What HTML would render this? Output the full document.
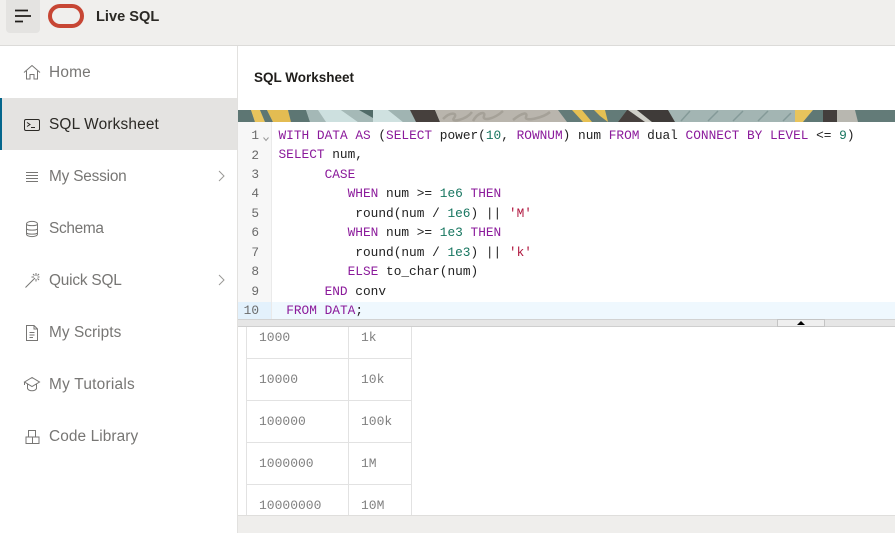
<!DOCTYPE html>
<html><head><meta charset="utf-8">
<style>
*{box-sizing:border-box}
html,body{margin:0;padding:0}
body{width:895px;height:533px;overflow:hidden;background:#fff;position:relative;font-family:"Liberation Sans",sans-serif}
.abs{position:absolute}
#top{left:0;top:0;width:895px;height:46px;background:#f0efed;border-bottom:1.5px solid #dcdbd9}
#burger{left:6px;top:0;width:34px;height:33px;background:#e4e3e1;border-radius:0 0 4px 4px}
#title{left:96px;top:7px;font-size:14.6px;font-weight:bold;color:#2b2925;line-height:20px}
#side{left:0;top:46px;width:238px;height:487px;background:#fff;border-right:1px solid #e2e1df}
#sel{left:0;top:98px;width:237px;height:52px;background:#e4e3e1;border-left:2px solid #04668c}
.nav{position:absolute;left:49px;font-size:15.4px;line-height:20px;color:#777674;white-space:nowrap}
.nav.on{color:#2b2925}
.ic{position:absolute;left:22px;width:20px;height:20px;fill:none;stroke:#777674;stroke-width:1}
.chev{position:absolute;left:217px;width:9px;height:12px;fill:none;stroke:#9a9996;stroke-width:1}
#h{left:254px;top:69px;font-size:13.5px;font-weight:bold;color:#1f1d1a;line-height:18px}
#gut{left:238px;top:122px;width:34px;height:197px;background:#f7f7f7;border-right:1px solid #eaeaea}
#act{left:272px;top:302px;width:623px;height:17px;background:#eff8fe}
#actg{left:238px;top:302px;width:33px;height:17px;background:#e3f1fc}
.ln{position:absolute;right:636px;font:12.8px/19.45px "Liberation Mono",monospace;color:#6a6a6a;width:40px;text-align:right}
#code{left:278.5px;top:126px;margin:0;font:12.8px/19.45px "Liberation Mono",monospace;color:#222;white-space:pre}
.k{color:#8b1a9b}.n{color:#16755f}.s{color:#b0173f}
#split{left:238px;top:319px;width:657px;height:8px;background:#e6e6e6;border-top:1px solid #d2d2d2;border-bottom:1px solid #cfcfcf}
#grip{left:777px;top:319px;width:48px;height:8px;background:#efefef;border:1px solid #c4c4c4}
#tri{left:797px;top:321px;width:0;height:0;border-left:4px solid transparent;border-right:4px solid transparent;border-bottom:4px solid #000}
#res{left:238px;top:327px;width:657px;height:189px;overflow:hidden;background:#fff}
.hl,.vl{position:absolute;background:#e2e2e2}
.c{position:absolute;font:13px/18px "Liberation Mono",monospace;color:#808080;white-space:pre}
#foot{left:238px;top:515px;width:657px;height:18px;background:#efeeec;border-top:1px solid #dfdedc}
</style></head><body>

<div class="abs" id="top"></div>
<div class="abs" id="burger"></div>
<svg class="abs" style="left:14px;top:8px" width="18" height="16"><path d="M1 2.5H14M1 8H17M1 13.5H9" stroke="#1f1d1a" stroke-width="1.8" fill="none"/></svg>
<svg class="abs" style="left:47px;top:3px" width="38" height="26"><rect x="3" y="3" width="32" height="20" rx="10" fill="none" stroke="#c74634" stroke-width="4"/></svg>
<div class="abs" id="title">Live SQL</div>

<div class="abs" id="side"></div>
<div class="abs" id="sel"></div>

<svg class="ic" style="top:62px" viewBox="0 0 20 20"><path d="M2 10.5L10 3.5L18 10.5M4.5 9V17H8V12.5H12V17H15.5V9"/></svg>
<div class="nav" style="top:63px;letter-spacing:.2px">Home</div>

<svg class="ic" style="top:115px" viewBox="0 0 20 20"><rect x="2.5" y="4.5" width="15" height="11" rx="1.5" stroke="#2b2925"/><path d="M5 7.5L8 9.5L5 11.5M9 12.5H13" stroke="#2b2925"/></svg>
<div class="nav on" style="top:115px;letter-spacing:.17px">SQL Worksheet</div>

<svg class="ic" style="top:167px" viewBox="0 0 20 20"><path d="M4 5.5H16M4 8.5H16M4 11.5H16M4 14.5H16"/></svg>
<div class="nav" style="top:167px;letter-spacing:-.2px">My Session</div>
<svg class="chev" style="top:170px" viewBox="0 0 9 12"><path d="M2 1L7 6L2 11"/></svg>

<svg class="ic" style="top:219px" viewBox="0 0 20 20"><path d="M4.5 5C4.5 1.5 15.5 1.5 15.5 5V15C15.5 18.5 4.5 18.5 4.5 15ZM4.5 5.5C6 7 14 7 15.5 5.5M4.5 10C6 11.5 14 11.5 15.5 10M4.5 14C6 15.5 14 15.5 15.5 14"/></svg>
<div class="nav" style="top:219px;letter-spacing:-.3px">Schema</div>

<svg class="ic" style="top:270px" viewBox="0 0 20 20"><path d="M3.5 17.5L13 8M14 3V6M14 9V11.5M9.5 7H12M15.5 7H17.5M11 4L12.5 5.5M17 4L15.5 5.5M15.5 8.5L17 10"/></svg>
<div class="nav" style="top:271px;letter-spacing:-.2px">Quick SQL</div>
<svg class="chev" style="top:274px" viewBox="0 0 9 12"><path d="M2 1L7 6L2 11"/></svg>

<svg class="ic" style="top:323px" viewBox="0 0 20 20"><path d="M4.5 2.5H12L15.5 6V17.5H4.5ZM12 2.5V6H15.5M7.5 9.5H12.5M7.5 12H12.5M7.5 14.5H11"/></svg>
<div class="nav" style="top:323px;letter-spacing:.05px">My Scripts</div>

<svg class="ic" style="top:374px" viewBox="0 0 20 20"><path d="M10 3.5L2.5 8L10 12.5L17.5 8ZM5.5 10V14.5C7 17.5 13 17.5 14.5 14.5V10M2.5 8V11"/></svg>
<div class="nav" style="top:375px;letter-spacing:.25px">My Tutorials</div>

<svg class="ic" style="top:427px" viewBox="0 0 20 20"><path d="M6.5 3.5H13.5V10H6.5ZM4 10H17V16.5H4ZM10.5 10V16.5"/></svg>
<div class="nav" style="top:427px;letter-spacing:.1px">Code Library</div>

<div class="abs" id="h">SQL Worksheet</div>

<svg class="abs" style="left:238px;top:110px" width="657" height="12" viewBox="0 0 657 12" preserveAspectRatio="none">
<rect width="657" height="12" fill="#a3b5b3"/>
<polygon points="0,0 13,0 17,12 0,12" fill="#5d7673"/>
<polygon points="13,0 22,0 27,12 17,12" fill="#e8c35c"/>
<polygon points="22,0 29,0 35,12 27,12" fill="#5d7673"/>
<polygon points="29,0 50,0 53,12 35,12" fill="#e3bc52"/>
<polygon points="50,0 68,0 72,12 53,12" fill="#5d7673"/>
<polygon points="68,0 80,0 88,12 72,12" fill="#a4b8b6"/>
<polygon points="80,0 103,0 120,12 88,12" fill="#cde0df"/>
<polygon points="103,0 121,0 135,8 135,12 120,12" fill="#a5b9b7"/>
<polygon points="121,0 135,0 135,8" fill="#516b68"/>
<polygon points="135,0 150,0 165,12 135,12" fill="#cfe1e0"/>
<polygon points="150,0 172,0 178,12 165,12" fill="#a0b4b2"/>
<polygon points="172,0 197,0 202,12 178,12" fill="#46403d"/>
<polygon points="197,0 320,0 329,12 202,12" fill="#b9b5ad"/>
<g fill="none" stroke="#a5a198" stroke-width="2.5"><path d="M205 9C213 1 220 3 216 8S228 10 234 2M235 11C240 2 248 1 246 6S255 10 265 1M275 10C285 2 290 2 288 7S305 8 312 2"/></g>
<polygon points="320,0 389,0 380,12 329,12" fill="#637b78"/>
<polygon points="334,0 344,0 354,12 345,12" fill="#e6c053"/>
<polygon points="356,0 367,0 370,12 362,6" fill="#e6c053"/>
<polygon points="389,0 399,0 414,12 380,12" fill="#46403d"/>
<polygon points="390,0 399,0 414,12 407,12" fill="#cfcfc8"/>
<polygon points="399,0 430,0 437,12 414,12" fill="#3f3b39"/>
<g stroke="#849a98" stroke-width="1.5"><path d="M443 11L452 1M470 11L480 1M495 11L505 1M520 11L530 1M545 11L553 3"/></g>
<polygon points="557,0 575,0 565,12 557,12" fill="#e8c45c"/>
<polygon points="575,0 585,0 585,12 565,12" fill="#5f7875"/>
<polygon points="585,0 599,0 599,12 585,12" fill="#433e3c"/>
<polygon points="599,0 617,0 620,12 599,12" fill="#b8b7b0"/>
<polygon points="617,0 657,0 657,12 620,12" fill="#637b78"/>
</svg>

<div class="abs" id="gut"></div>
<div class="abs" id="act"></div>
<div class="abs" id="actg"></div>
<div class="ln" style="top:126px">1</div>
<svg class="abs" style="left:262px;top:135px" width="8" height="8"><path d="M1.5 2.5L4 5.5L6.5 2.5" stroke="#999" fill="none"/></svg>
<div class="ln" style="top:145.5px">2</div>
<div class="ln" style="top:165px">3</div>
<div class="ln" style="top:184.3px">4</div>
<div class="ln" style="top:203.8px">5</div>
<div class="ln" style="top:223.2px">6</div>
<div class="ln" style="top:242.7px">7</div>
<div class="ln" style="top:262.1px">8</div>
<div class="ln" style="top:281.6px">9</div>
<div class="ln" style="top:301px">10</div>

<pre class="abs" id="code"><span class="k">WITH</span> <span class="k">DATA</span> <span class="k">AS</span> (<span class="k">SELECT</span> power(<span class="n">10</span>, <span class="k">ROWNUM</span>) num <span class="k">FROM</span> dual <span class="k">CONNECT</span> <span class="k">BY</span> <span class="k">LEVEL</span> &lt;= <span class="n">9</span>)
<span class="k">SELECT</span> num,
      <span class="k">CASE</span>
         <span class="k">WHEN</span> num &gt;= <span class="n">1e6</span> <span class="k">THEN</span>
          round(num / <span class="n">1e6</span>) || <span class="s">'M'</span>
         <span class="k">WHEN</span> num &gt;= <span class="n">1e3</span> <span class="k">THEN</span>
          round(num / <span class="n">1e3</span>) || <span class="s">'k'</span>
         <span class="k">ELSE</span> to_char(num)
      <span class="k">END</span> conv
 <span class="k">FROM</span> <span class="k">DATA</span>;</pre>

<div class="abs" id="split"></div>
<div class="abs" id="grip"></div>
<div class="abs" id="tri"></div>

<div class="abs" id="res">
<div class="vl" style="left:8px;top:0;width:1px;height:189px"></div>
<div class="vl" style="left:110px;top:0;width:1px;height:189px"></div>
<div class="vl" style="left:173px;top:0;width:1px;height:189px"></div>
<div class="hl" style="left:8px;top:31px;width:166px;height:1px"></div>
<div class="hl" style="left:8px;top:73px;width:166px;height:1px"></div>
<div class="hl" style="left:8px;top:115px;width:166px;height:1px"></div>
<div class="hl" style="left:8px;top:157px;width:166px;height:1px"></div>
<div class="c" style="left:21px;top:2px">1000</div><div class="c" style="left:123px;top:2px">1k</div>
<div class="c" style="left:21px;top:44px">10000</div><div class="c" style="left:123px;top:44px">10k</div>
<div class="c" style="left:21px;top:86px">100000</div><div class="c" style="left:123px;top:86px">100k</div>
<div class="c" style="left:21px;top:128px">1000000</div><div class="c" style="left:123px;top:128px">1M</div>
<div class="c" style="left:21px;top:170px">10000000</div><div class="c" style="left:123px;top:170px">10M</div>
</div>
<div class="abs" id="foot"></div>
</body></html>
